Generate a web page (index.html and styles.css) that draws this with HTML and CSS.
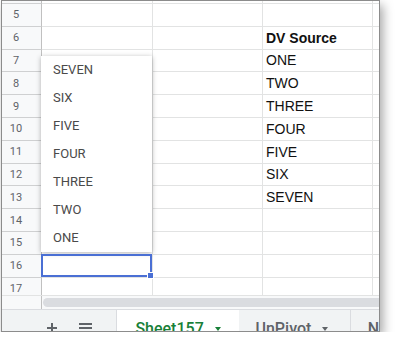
FILE: index.html
```html
<!DOCTYPE html>
<html lang="en">
<head>
    <meta charset="UTF-8">
    <meta name="viewport" content="width=device-width, initial-scale=1.0">
    <title>Sheet157 - Data validation</title>
    <link rel="stylesheet" href="styles.css">
</head>
<body>
    <div class="window">
        <div class="grid">
            <div class="row cut"><div class="num"></div><div></div><div></div><div></div><div class="last"></div></div>
            <div class="row"><div class="num">5</div><div></div><div></div><div class="cell"></div><div class="last"></div></div>
            <div class="row"><div class="num">6</div><div></div><div></div><div class="cell bold">DV Source</div><div class="last"></div></div>
            <div class="row"><div class="num">7</div><div></div><div></div><div class="cell">ONE</div><div class="last"></div></div>
            <div class="row"><div class="num">8</div><div></div><div></div><div class="cell">TWO</div><div class="last"></div></div>
            <div class="row"><div class="num">9</div><div></div><div></div><div class="cell">THREE</div><div class="last"></div></div>
            <div class="row"><div class="num">10</div><div></div><div></div><div class="cell">FOUR</div><div class="last"></div></div>
            <div class="row"><div class="num">11</div><div></div><div></div><div class="cell">FIVE</div><div class="last"></div></div>
            <div class="row"><div class="num">12</div><div></div><div></div><div class="cell">SIX</div><div class="last"></div></div>
            <div class="row"><div class="num">13</div><div></div><div></div><div class="cell">SEVEN</div><div class="last"></div></div>
            <div class="row"><div class="num">14</div><div></div><div></div><div class="cell"></div><div class="last"></div></div>
            <div class="row"><div class="num">15</div><div></div><div></div><div class="cell"></div><div class="last"></div></div>
            <div class="row"><div class="num">16</div><div></div><div></div><div class="cell"></div><div class="last"></div></div>
            <div class="row"><div class="num">17</div><div></div><div></div><div class="cell"></div><div class="last"></div></div>

            <!-- dropdown list of the validated cell -->
            <div class="dv-menu">
                <div class="dv-item">SEVEN</div>
                <div class="dv-item">SIX</div>
                <div class="dv-item">FIVE</div>
                <div class="dv-item">FOUR</div>
                <div class="dv-item">THREE</div>
                <div class="dv-item">TWO</div>
                <div class="dv-item">ONE</div>
            </div>
            <div class="selection"><span class="handle"></span></div>
        </div>

        <div class="scroll">
            <div class="corner"></div>
            <div class="thumb"></div>
        </div>

        <div class="tabbar">
            <div class="tab-tools">
                <svg class="icon" width="10" height="10" viewBox="0 0 10 10"><path d="M5 0V10M0 5H10" stroke="#5f6368" stroke-width="2"/></svg>
                <svg class="icon menu-icon" width="13" height="10" viewBox="0 0 13 10"><path d="M0 1H13M0 5H13M0 9H13" stroke="#5f6368" stroke-width="2"/></svg>
            </div>
            <div class="tab active">Sheet157<span class="caret"></span></div>
            <div class="tab">UnPivot<span class="caret"></span></div>
            <div class="tab more">N</div>
        </div>
    </div>
</body>
</html>
```

FILE: styles.css
```css
body {
    margin: 0;
    background: #fff;
    font-family: Roboto, Arial, sans-serif;
}
.window {
    margin-left: 1px;
    width: 377px;
    border: 1px solid #8c8c8c;
    background: #fff;
    box-shadow: 3px 5px 10px rgba(0, 0, 0, 0.35);
    overflow: hidden;
}
.grid {
    position: relative;
    height: 294px;
    overflow: hidden;
}
.row {
    display: grid;
    grid-template-columns: 40px 111px 110px 110px 6px;
    height: 22.8px;
}
.row.cut {
    height: 3px;
}
.row > div {
    box-sizing: border-box;
    border-right: 1px solid #e2e3e3;
    border-bottom: 1px solid #e2e3e3;
}
.row > .last {
    border-right: none;
}
.row .num {
    display: flex;
    align-items: center;
    justify-content: center;
    padding-right: 11px;
    background: #f8f9fa;
    border-right-color: #c0c0c0;
    border-bottom-color: #cfd0d1;
    color: #5f6368;
    font-size: 11px;
}
.row .cell {
    display: flex;
    align-items: center;
    padding-left: 3px;
    font-family: "Liberation Sans", Arial, sans-serif;
    font-size: 14px;
    color: #111;
}
.row .bold {
    font-weight: bold;
}
.dv-menu {
    position: absolute;
    left: 39px;
    top: 55px;
    width: 111px;
    background: #fff;
    box-shadow: 0 1px 5px rgba(0, 0, 0, 0.3);
}
.dv-item {
    height: 28px;
    line-height: 28px;
    padding-left: 12px;
    font-size: 13px;
    color: #4a4a4a;
}
.selection {
    position: absolute;
    left: 39px;
    top: 253px;
    width: 111px;
    height: 23px;
    box-sizing: border-box;
    border: 2px solid #4a6fd4;
}
.handle {
    position: absolute;
    right: -4px;
    bottom: -4px;
    width: 5px;
    height: 5px;
    background: #4a6fd4;
    border: 1px solid #fff;
}
.scroll {
    display: flex;
    height: 14px;
    box-sizing: border-box;
    background: #f8f9fa;
    border-top: 1px solid #e2e3e3;
}
.corner {
    width: 40px;
    box-sizing: border-box;
    border-right: 1px solid #c0c0c0;
}
.thumb {
    flex: 1;
    height: 9px;
    margin: 2px 0 0 1px;
    background: #dadce0;
    border-radius: 5px 0 0 5px;
}
.tabbar {
    display: flex;
    height: 22px;
    box-sizing: border-box;
    background: #f1f3f4;
    border-top: 1px solid #dadce0;
    overflow: hidden;
}
.tab-tools {
    display: flex;
    align-items: flex-start;
    width: 115px;
    padding: 13px 0 0 45px;
    box-sizing: border-box;
}
.menu-icon {
    margin-left: 22px;
}
.tab {
    display: flex;
    align-items: flex-start;
    padding: 11px 0 0 16px;
    box-sizing: border-box;
    width: 112px;
    border-right: 1px solid #dadce0;
    font-size: 16px;
    font-weight: 500;
    line-height: 16px;
    color: #5f6368;
}
.tab.active {
    width: 124px;
    padding-left: 18px;
    background: #fff;
    border-left: 1px solid #dadce0;
    border-right: none;
    color: #188038;
}
.tab.more {
    width: auto;
    padding-left: 17px;
    border-right: none;
}
.caret {
    margin: 6px 0 0 11px;
    border-left: 3.5px solid transparent;
    border-right: 3.5px solid transparent;
    border-top: 4px solid currentColor;
}
```
